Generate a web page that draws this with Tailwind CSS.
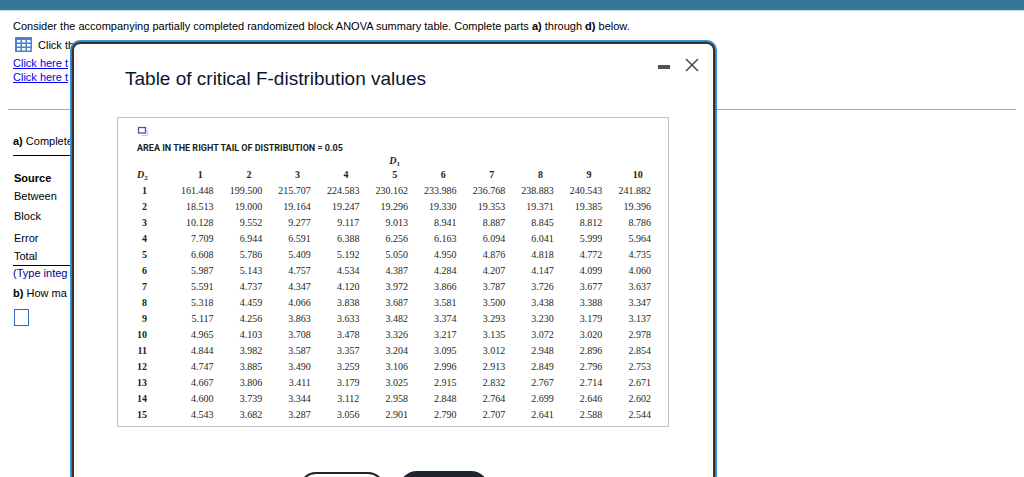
<!DOCTYPE html>
<html lang="en">

<head>
    <meta charset="UTF-8">
    <meta name="viewport" content="width=device-width, initial-scale=1.0">
    <title>Randomized block ANOVA</title>
    <script src="https://cdn.jsdelivr.net/npm/@tailwindcss/browser@4"></script>
</head>

<body class="relative h-screen overflow-hidden bg-white font-['Liberation_Sans',Arial,sans-serif] text-[11px] leading-[14px] text-black">
    <!-- Top bar -->
    <header class="h-[11px] border-b border-[#d5dbe3] bg-[#347797]"></header>

    <!-- Question -->
    <main class="px-2">
        <section class="h-[99px] border-b border-[#a3a7b4] px-[5px] pt-2">
            <p>Consider the accompanying partially completed randomized block ANOVA summary table. Complete parts <b>a)</b> through <b>d)</b> below.</p>
            <div class="mt-1 flex items-center gap-1.5 pl-[2px]">
                <svg class="h-[15px] w-[17px]" viewBox="0 0 17 15">
                    <rect width="17" height="15" rx="1" fill="#4a80d0" />
                    <path fill="#fff" d="M2 3h3.500v2.500H2zM7 3h3.500v2.500H7zM12 3h3.500v2.500H12zM2 7h3.500v2.500H2zM7 7h3.500v2.500H7zM12 7h3.500v2.500H12zM2 11h3.500v2.500H2zM7 11h3.500v2.500H7zM12 11h3.500v2.500H12z" />
                </svg>
                <span>Click th</span>
            </div>
            <div class="mt-1 flex flex-col items-start">
                <a class="text-[#0000ee] underline" href="#">Click here t</a>
                <a class="text-[#0000ee] underline" href="#">Click here t</a>
            </div>
        </section>

        <section class="px-[5px] pt-6">
            <p><b>a)</b> Complete</p>
            <table class="mt-[7px] w-1/2 border-y border-black text-left">
                <thead>
                    <tr class="h-[31px]"><th class="pb-[2px] pl-px align-bottom font-bold">Source</th></tr>
                </thead>
                <tbody>
                    <tr class="h-[18px]"><td class="pl-px">Between</td></tr>
                    <tr class="h-[23px]"><td class="pl-px">Block</td></tr>
                    <tr class="h-[20px]"><td class="pl-px">Error</td></tr>
                    <tr class="h-[18px]"><td class="pl-px">Total</td></tr>
                </tbody>
            </table>
            <p class="text-[#00008b]">(Type integ</p>
            <label class="mt-1.5 block" for="answer"><b>b)</b> How ma</label>
            <input id="answer" type="text" class="mt-[9px] ml-px block h-[17px] w-[15px] border border-[#3c64c8]">
        </section>
    </main>

    <!-- Critical values dialog -->
    <div role="dialog" aria-labelledby="dialog-title" class="absolute top-[42px] left-[72px] w-[643px] rounded-lg border-2 border-[#333] bg-white px-[43px] pb-6 ring-2 ring-[#3a96dc] outline-1 outline-dotted outline-[#3f5f7c]">
        <div class="-mr-[30px] flex justify-between pt-3 pl-2">
            <h1 id="dialog-title" class="pt-[11px] text-[19px] leading-6 text-[#0a1530]">Table of critical F-distribution values</h1>
            <div class="flex h-5 items-center gap-[14px]">
                <button type="button" aria-label="Minimize">
                    <svg class="h-5 w-3" viewBox="0 0 12 20"><rect y="9" width="12" height="4" fill="#505058" /></svg>
                </button>
                <button type="button" aria-label="Close">
                    <svg class="h-5 w-4" viewBox="0 0 16 20" fill="none" stroke="#414b5a" stroke-width="1.5"><path d="M2 3l12 12M14 3L2 15" /></svg>
                </button>
            </div>
        </div>

        <div class="mt-[26px] mr-px border border-[#c0c0c0] pt-2 pr-[17px] pb-[3px] pl-[19px] text-[#231f20]">
            <svg class="h-3 w-3" viewBox="0 0 12 12" fill="none">
                <path d="M4.500 9.500H10.500V4.500H9" stroke="#c9cdea" />
                <rect x="1.500" y="1.500" width="7" height="5.500" fill="#fff" stroke="#4a55a8" stroke-width="1.300" />
            </svg>
            <h2 class="mt-1 font-[Roboto,sans-serif] text-[9px] leading-3 font-bold">AREA IN THE RIGHT TAIL OF DISTRIBUTION = 0.05</h2>
            <table class="w-full table-fixed font-['Liberation_Serif',serif] text-[10px] leading-4">
                <thead>
                    <tr class="h-[13px]">
                        <th class="w-[28px]"></th>
                        <td colspan="4"></td>
                        <th class="pl-[22px] font-bold italic leading-[13px]">D<sub class="text-[7px] not-italic">1</sub></th>
                        <td colspan="5"></td>
                    </tr>
                    <tr id="columns" class="h-4">
                        <th class="text-left font-bold italic leading-4">D<sub class="text-[7px] not-italic">2</sub></th>
                    </tr>
                </thead>
                <tbody id="rows"></tbody>
            </table>
        </div>

        <div class="mt-11 flex items-start justify-center gap-[14px]">
            <button type="button" aria-label="Print" class="mt-px h-[34px] w-[86px] rounded-full border-2 border-[#1f2430]"></button>
            <button type="button" aria-label="Done" class="h-9 w-[90px] rounded-full bg-[#1f2430]"></button>
        </div>
    </div>

    <script>
        // F values for 1-10 numerator degrees of freedom, one line per denominator
        const values = `161.448 199.500 215.707 224.583 230.162 233.986 236.768 238.883 240.543 241.882
18.513 19.000 19.164 19.247 19.296 19.330 19.353 19.371 19.385 19.396
10.128 9.552 9.277 9.117 9.013 8.941 8.887 8.845 8.812 8.786
7.709 6.944 6.591 6.388 6.256 6.163 6.094 6.041 5.999 5.964
6.608 5.786 5.409 5.192 5.050 4.950 4.876 4.818 4.772 4.735
5.987 5.143 4.757 4.534 4.387 4.284 4.207 4.147 4.099 4.060
5.591 4.737 4.347 4.120 3.972 3.866 3.787 3.726 3.677 3.637
5.318 4.459 4.066 3.838 3.687 3.581 3.500 3.438 3.388 3.347
5.117 4.256 3.863 3.633 3.482 3.374 3.293 3.230 3.179 3.137
4.965 4.103 3.708 3.478 3.326 3.217 3.135 3.072 3.020 2.978
4.844 3.982 3.587 3.357 3.204 3.095 3.012 2.948 2.896 2.854
4.747 3.885 3.490 3.259 3.106 2.996 2.913 2.849 2.796 2.753
4.667 3.806 3.411 3.179 3.025 2.915 2.832 2.767 2.714 2.671
4.600 3.739 3.344 3.112 2.958 2.848 2.764 2.699 2.646 2.602
4.543 3.682 3.287 3.056 2.901 2.790 2.707 2.641 2.588 2.544`;

        // Column headings
        for (let i = 1; i <= 10; i++) {
            document.getElementById('columns').innerHTML += `<th class="pl-[22px] font-bold">${i}</th>`;
        }

        // Table rows
        document.getElementById('rows').innerHTML = values.split('\n').map((line, i) =>
            `<tr><th class="pr-[18px] text-right font-bold">${i + 1}</th>` +
            line.split(' ').map(v => `<td class="text-right">${v}</td>`).join('') + '</tr>'
        ).join('');
    </script>
</body>

</html>
